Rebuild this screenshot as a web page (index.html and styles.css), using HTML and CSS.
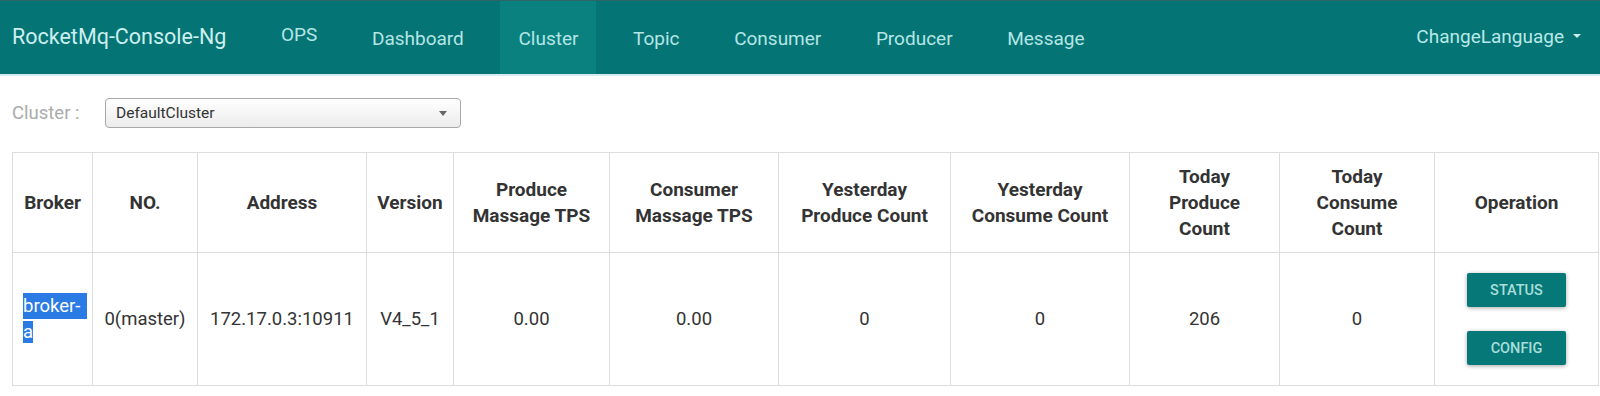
FILE: index.html
```html
<!DOCTYPE html>
<html lang="en">
<head>
  <meta charset="utf-8" />
  <meta name="viewport" content="width=device-width, initial-scale=1" />
  <title>RocketMq-Console-Ng</title>
  <link rel="stylesheet" href="styles.css">
</head>
<body>
  <header class="navbar">
    <a class="brand" href="#">RocketMq-Console-Ng</a>
    <nav class="nav">
      <a class="nav-link nav-ops" href="#">OPS</a>
      <a class="nav-link" href="#">Dashboard</a>
      <a class="nav-link active" href="#">Cluster</a>
      <a class="nav-link" href="#">Topic</a>
      <a class="nav-link" href="#">Consumer</a>
      <a class="nav-link" href="#">Producer</a>
      <a class="nav-link" href="#">Message</a>
    </nav>
    <a class="lang" href="#">ChangeLanguage <span class="caret"></span></a>
  </header>

  <main>
    <div class="toolbar">
      <label class="field-label">Cluster :</label>
      <div class="select">
        <span>DefaultCluster</span>
        <svg width="8" height="5" viewBox="0 0 8 5"><path d="M0 0h8L4 5z" fill="#666"/></svg>
      </div>
    </div>

    <table class="grid">
      <colgroup>
        <col style="width:80px"><col style="width:105px"><col style="width:169px"><col style="width:87px">
        <col style="width:156px"><col style="width:169px"><col style="width:172px"><col style="width:179px">
        <col style="width:150px"><col style="width:155px"><col style="width:164px">
      </colgroup>
      <thead>
        <tr>
          <th>Broker</th>
          <th>NO.</th>
          <th>Address</th>
          <th>Version</th>
          <th>Produce Massage TPS</th>
          <th>Consumer Massage TPS</th>
          <th>Yesterday Produce Count</th>
          <th>Yesterday Consume Count</th>
          <th class="narrow">Today Produce Count</th>
          <th class="narrow">Today Consume Count</th>
          <th>Operation</th>
        </tr>
      </thead>
      <tbody>
        <tr>
          <td class="broker"><span class="selected selected-line">broker-</span><br><span class="selected">a</span></td>
          <td>0(master)</td>
          <td>172.17.0.3:10911</td>
          <td>V4_5_1</td>
          <td>0.00</td>
          <td>0.00</td>
          <td>0</td>
          <td>0</td>
          <td>206</td>
          <td>0</td>
          <td>
            <button class="btn">STATUS</button>
            <button class="btn btn-next">CONFIG</button>
          </td>
        </tr>
      </tbody>
    </table>
  </main>
</body>
</html>
```

FILE: styles.css
```css
* {
  box-sizing: border-box;
}

body {
  margin: 0;
  font-family: "Roboto", "Liberation Sans", sans-serif;
  color: #333;
  background: #fff;
}

a {
  text-decoration: none;
}

.navbar {
  display: flex;
  align-items: stretch;
  height: 76px;
  background: #057474;
  border-top: 1px solid #2f6468;
  border-bottom: 2px solid #d6ecec;
}

.brand {
  display: flex;
  align-items: center;
  width: 263px;
  padding-left: 12px;
  padding-bottom: 3px;
  font-size: 21.5px;
  color: #cdeff0;
}

.nav {
  display: flex;
  align-items: stretch;
}

.nav-link {
  display: flex;
  align-items: center;
  padding: 2px 18px 0;
  margin-right: 18.6px;
  font-size: 19px;
  color: #b4e6e6;
}

.nav-ops {
  padding-top: 0;
  padding-bottom: 6px;
}

.nav-link.active {
  background: #0a807f;
}

.lang {
  display: flex;
  align-items: center;
  margin-left: auto;
  padding: 0 19px 3px 0;
  font-size: 19px;
  color: #b9e8e8;
}

.caret {
  margin-left: 9px;
  border-left: 4px solid transparent;
  border-right: 4px solid transparent;
  border-top: 4px solid #cdeeee;
}

.toolbar {
  display: flex;
  align-items: center;
  padding: 22px 0 0 12px;
}

.field-label {
  width: 93px;
  font-size: 18.5px;
  color: #ababab;
}

.select {
  display: flex;
  align-items: center;
  justify-content: space-between;
  width: 356px;
  height: 30px;
  padding: 0 13px 0 10px;
  border: 1px solid #a8a8a8;
  border-radius: 4px;
  background: linear-gradient(#ffffff, #ececec);
  font-size: 15.5px;
  color: #333;
}

.grid {
  margin: 24px 0 0 12px;
  width: 1586px;
  table-layout: fixed;
  border-collapse: collapse;
  border: 1px solid #dddddd;
}

.grid th,
.grid td {
  border: 1px solid #dddddd;
  padding: 0 8px;
  text-align: center;
  vertical-align: middle;
  line-height: 26px;
}

.grid th {
  height: 100px;
  font-size: 19px;
  font-weight: 700;
  color: #333;
}

.grid th.narrow {
  padding: 0 16px;
}

.grid td {
  height: 133px;
  font-size: 18.5px;
  color: #333;
}

.grid td.broker {
  text-align: left;
  padding-left: 10px;
}

.selected {
  background: #2a7be4;
  color: #fff;
}

.selected-line {
  display: inline-block;
  width: 64px;
}

.btn {
  display: block;
  width: 99px;
  height: 34px;
  margin: 0 auto;
  border: 0;
  border-radius: 2px;
  background: #057877;
  color: #a9dedb;
  font-family: "Roboto", "Liberation Sans", sans-serif;
  font-size: 14.5px;
  font-weight: 500;
  box-shadow: 0 1px 4px rgba(0, 0, 0, 0.35);
}

.btn-next {
  margin-top: 24px;
}
```
